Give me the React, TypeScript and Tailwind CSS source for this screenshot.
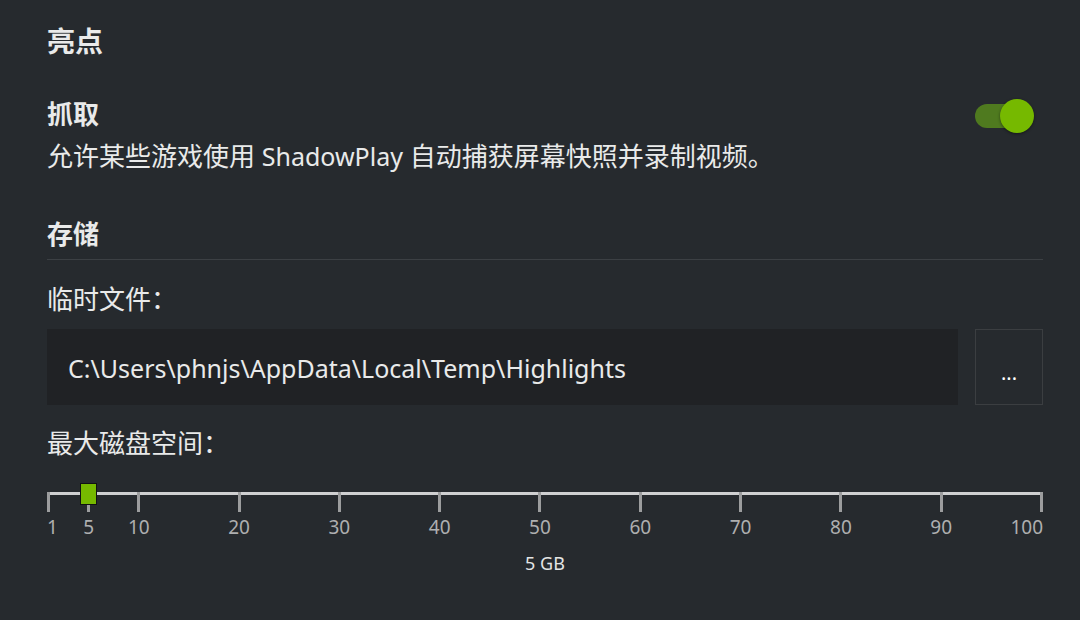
import React from "react";

const ticks = [1, 5, 10, 20, 30, 40, 50, 60, 70, 80, 90, 100];
const TRACK = 996;

// position of a value on the slider, in px from the left edge
const pos = (v: number) => ((v - 1) / 99) * (TRACK - 3);

const Toggle = ({ on }: { on: boolean }) => {
  return (
    <div className="relative mr-[16px] mt-[4px] h-[24px] w-[52px] rounded-full bg-[#4f7a1f]">
      {on && (
        <div className="absolute right-[-7px] top-[-5px] h-[34px] w-[34px] rounded-full bg-[#76b900] shadow-[0_1px_3px_rgba(0,0,0,0.45)]" />
      )}
    </div>
  );
};

const DiskSlider = ({ value }: { value: number }) => {
  return (
    <div className="relative mt-[31px] h-[53px] w-full">
      {/* track */}
      <div className="absolute left-0 top-0 h-[3px] w-full bg-[#cfd0d1]" />

      {/* ticks */}
      {ticks.map((t) => (
        <div
          key={t}
          className={`absolute w-[3px] bg-[#9c9d9e] ${t === 5 ? "top-[11px] h-[9px]" : "top-0 h-[20px]"}`}
          style={{ left: pos(t) }}
        />
      ))}

      {/* labels */}
      {ticks.map((t, i) => {
        const first = i === 0;
        const last = i === ticks.length - 1;
        return (
          <div
            key={`l${t}`}
            className={`absolute top-[25px] h-[20px] leading-[20px] text-[19px] text-[#aeafb0] ${
              first ? "" : last ? "-translate-x-full" : "-translate-x-1/2"
            }`}
            style={{ left: first ? 0 : last ? TRACK : pos(t) + 1.5 }}
          >
            {t}
          </div>
        );
      })}

      {/* thumb */}
      <div
        className="absolute top-[-9px] h-[22px] w-[17px] border border-[#111213] bg-[#76b900]"
        style={{ left: pos(value) + 1.5 - 9 }}
      />
    </div>
  );
};

export default function App() {
  return (
    <div className="h-[620px] w-[1080px] overflow-hidden bg-[#262a2e] pl-[47px] pr-[37px] pt-[22px] font-['Noto_Sans','Noto_Sans_CJK_SC',sans-serif] text-[#e9eaea]">
      {/* 亮点 */}
      <h1 className="h-[38px] text-[28px] font-bold leading-[38px]">亮点</h1>

      {/* 抓取 */}
      <div className="mt-[36px] flex h-[36px] items-center justify-between">
        <span className="text-[26px] font-bold leading-[36px]">抓取</span>
        <Toggle on />
      </div>
      <p className="mt-[6px] h-[36px] text-[26px] leading-[36px]">
        允许某些游戏使用 <span className="text-[25px]">ShadowPlay</span> 自动捕获屏幕快照并录制视频。
      </p>

      {/* 存储 */}
      <div className="mt-[42px] h-[36px] text-[26px] font-bold leading-[36px]">存储</div>
      <div className="mt-[7px] h-px bg-[#3c4044]" />

      <div className="mt-[21px] h-[36px] text-[26px] leading-[36px]">临时文件：</div>
      <div className="mt-[12px] flex h-[76px] gap-[17px]">
        <div className="flex flex-1 items-center bg-[#202225] pl-[21px] pt-[3px] text-[25px]">
          C:\Users\phnjs\AppData\Local\Temp\Highlights
        </div>
        <button className="flex w-[68px] items-center justify-center border border-[#3b3e41] pt-[12px] text-[20px] text-white">
          ...
        </button>
      </div>

      <div className="mt-[20px] h-[36px] text-[26px] leading-[36px]">最大磁盘空间：</div>
      <DiskSlider value={5} />
      <div className="mt-[7px] h-[22px] text-center text-[18px] leading-[22px] text-[#e4e5e5]">5 GB</div>
    </div>
  );
}
